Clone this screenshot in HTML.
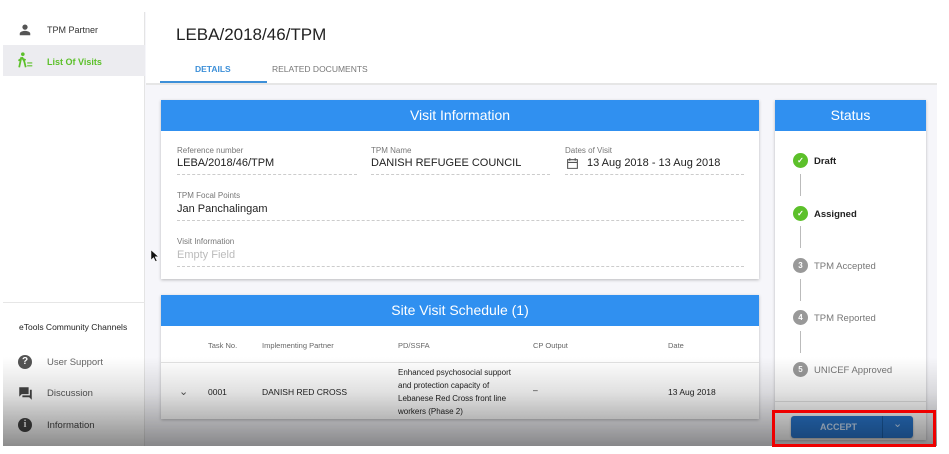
<!DOCTYPE html>
<html><head><meta charset="utf-8"><style>
*{box-sizing:border-box;margin:0;padding:0}
body{width:949px;height:454px;background:#fff;font-family:"Liberation Sans",sans-serif;position:relative;overflow:hidden}
.screen{position:absolute;left:3px;top:12px;width:934px;height:434px;background:#f6f6fa;overflow:hidden}
.side{position:absolute;left:0;top:0;width:142px;height:434px;background:#fff;border-right:1px solid #e4e4e4}
.hdr{position:absolute;left:143px;top:0;right:0;height:73px;background:#fff;border-bottom:2px solid #e6e6e6}
.abs{position:absolute}
.card{position:absolute;background:#fff;box-shadow:0 1px 3px rgba(0,0,0,.25)}
.ch{background:#3090f0;color:#fff;text-align:center;font-size:14px;height:31px;line-height:31px}
.lbl{position:absolute;font-size:8px;color:#777}
.val{position:absolute;font-size:11px;color:#222;border-bottom:1px dashed #ccc;padding-bottom:5px}
.th{position:absolute;font-size:7.5px;color:#666}
.td{position:absolute;font-size:8.5px;color:#222}
.st{position:absolute;left:792px;font-size:9.5px;color:#777}
.dot{position:absolute;left:790px;width:15px;height:15px;border-radius:50%;background:#999;color:#fff;font-size:8px;text-align:center;line-height:15px;font-weight:bold}
.gdot{background:#5cc02a}
.vl{position:absolute;left:797px;width:1px;height:22px;background:#bbb}
</style></head><body>
<div class="screen">
<div class="side">
 <svg class="abs" style="left:15px;top:11px" width="14" height="14" viewBox="0 0 24 24"><circle cx="12" cy="7" r="4.5" fill="#555"/><path d="M3 21v-3c0-3 6-4.5 9-4.5s9 1.5 9 4.5v3z" fill="#555"/></svg>
 <div class="abs" style="left:44px;top:13px;font-size:9px;color:#333">TPM Partner</div>
 <div class="abs" style="left:0;top:33px;width:142px;height:31px;background:#ececf0"></div>
 <svg class="abs" style="left:13px;top:40px" width="18" height="16" viewBox="0 0 24 22"><circle cx="9" cy="3" r="2.5" fill="#5cc02a"/><path d="M7 7l-3 14M8 7l3 6 2 8M7 9l-4 3M8 9l5 2" stroke="#5cc02a" stroke-width="2.4" fill="none"/><path d="M15 15h7M15 19h7" stroke="#5cc02a" stroke-width="1.5"/></svg>
 <div class="abs" style="left:44px;top:45px;font-size:9px;color:#5cc02a;font-weight:bold">List Of Visits</div>
 <div class="abs" style="left:0;top:290px;width:142px;height:1px;background:#e6e6e6"></div>
 <div class="abs" style="left:16px;top:310px;font-size:8.5px;color:#222">eTools Community Channels</div>
 <div class="abs" style="left:15px;top:343px;width:14px;height:14px;border-radius:50%;background:#555;color:#fff;font-size:10px;text-align:center;line-height:14px;font-weight:bold">?</div>
 <div class="abs" style="left:44px;top:345px;font-size:9.5px;color:#666">User Support</div>
 <svg class="abs" style="left:15px;top:374px" width="15" height="15" viewBox="0 0 24 24"><path d="M2 2h15v11H6l-4 4zM19 6h3v16l-4-4H7v-3h12z" fill="#444"/></svg>
 <div class="abs" style="left:44px;top:376px;font-size:9.5px;color:#555">Discussion</div>
 <div class="abs" style="left:15px;top:406px;width:14px;height:14px;border-radius:50%;background:#444;color:#fff;font-size:10px;text-align:center;line-height:14px;font-weight:bold;font-family:'Liberation Serif',serif">i</div>
 <div class="abs" style="left:44px;top:408px;font-size:9.5px;color:#444">Information</div>
</div>
<div class="hdr">
 <div class="abs" style="left:30px;top:13px;font-size:17px;color:#222">LEBA/2018/46/TPM</div>
 <div class="abs" style="left:49px;top:52px;font-size:8.5px;color:#3c8fd8;font-weight:bold">DETAILS</div>
 <div class="abs" style="left:14px;top:69px;width:107px;height:2px;background:#3c8fd8"></div>
 <div class="abs" style="left:126px;top:52px;font-size:8.5px;color:#777">RELATED DOCUMENTS</div>
</div>
<div class="card" style="left:158px;top:88px;width:598px;height:179px"><div class="ch">Visit Information</div></div>
<div class="lbl" style="left:174px;top:134px">Reference number</div>
<div class="val" style="left:174px;top:145px;width:180px">LEBA/2018/46/TPM</div>
<div class="lbl" style="left:368px;top:134px">TPM Name</div>
<div class="val" style="left:368px;top:145px;width:179px">DANISH REFUGEE COUNCIL</div>
<div class="lbl" style="left:562px;top:134px">Dates of Visit</div>
<svg class="abs" style="left:563px;top:145px" width="13" height="13" viewBox="0 0 24 24"><path d="M3 5h18v16H3zM3 10h18M7 2v5M17 2v5" stroke="#555" stroke-width="2" fill="none"/></svg>
<div class="val" style="left:562px;top:145px;width:179px;padding-left:22px">13 Aug 2018 - 13 Aug 2018</div>
<div class="lbl" style="left:174px;top:179px">TPM Focal Points</div>
<div class="val" style="left:174px;top:191px;width:567px">Jan Panchalingam</div>
<div class="lbl" style="left:174px;top:225px">Visit Information</div>
<div class="val" style="left:174px;top:237px;width:567px;color:#bbb">Empty Field</div>
<div class="card" style="left:158px;top:283px;width:598px;height:124px"><div class="ch">Site Visit Schedule (1)</div>
 <div class="abs" style="left:0;top:67px;width:100%;height:1px;background:#e2e2e2"></div></div>
<div class="th" style="left:205px;top:329px">Task No.</div>
<div class="th" style="left:259px;top:329px">Implementing Partner</div>
<div class="th" style="left:395px;top:329px">PD/SSFA</div>
<div class="th" style="left:530px;top:329px">CP Output</div>
<div class="th" style="left:665px;top:329px">Date</div>
<div class="td" style="left:176px;top:373px;font-size:11px;color:#555">&#8964;</div>
<div class="td" style="left:205px;top:375px">0001</div>
<div class="td" style="left:259px;top:375px">DANISH RED CROSS</div>
<div class="td" style="left:395px;top:354px;line-height:13px;font-size:8px;white-space:nowrap">Enhanced psychosocial support<br>and protection capacity of<br>Lebanese Red Cross front line<br>workers (Phase 2)</div>
<div class="td" style="left:530px;top:373px">–</div>
<div class="td" style="left:665px;top:375px">13 Aug 2018</div>
<div class="card" style="left:772px;top:88px;width:151px;height:340px"><div class="ch">Status</div>
 <div class="abs" style="left:0;top:301px;width:100%;height:1px;background:#e2e2e2"></div></div>
<div class="dot gdot" style="top:141px">✓</div><div class="st" style="left:811px;top:144px;color:#222;font-weight:bold">Draft</div>
<div class="vl" style="top:162px"></div>
<div class="dot gdot" style="top:194px">✓</div><div class="st" style="left:811px;top:197px;color:#222;font-weight:bold">Assigned</div>
<div class="vl" style="top:214px"></div>
<div class="dot" style="top:246px">3</div><div class="st" style="left:811px;top:249px">TPM Accepted</div>
<div class="vl" style="top:267px"></div>
<div class="dot" style="top:298px">4</div><div class="st" style="left:811px;top:301px">TPM Reported</div>
<div class="vl" style="top:319px"></div>
<div class="dot" style="top:350px">5</div><div class="st" style="left:811px;top:353px">UNICEF Approved</div>
<div class="abs" style="left:788px;top:404px;width:122px;height:22px;background:#2a78d0;border-radius:3px;box-shadow:0 1px 2px rgba(0,0,0,.3)"></div>
<div class="abs" style="left:879px;top:404px;width:1px;height:22px;background:#1b5fa8"></div>
<div class="abs" style="left:817px;top:410px;font-size:9px;color:#cfe3fa;font-weight:bold">ACCEPT</div>
<div class="abs" style="left:890px;top:405px;font-size:11px;color:#cfe3fa">&#8964;</div>
<div class="abs" style="left:0;top:345px;width:934px;height:89px;background:linear-gradient(rgba(0,0,0,0),rgba(0,0,0,.12) 40%,rgba(0,0,0,.45))"></div>
<svg class="abs" style="left:148px;top:238px" width="8" height="12" viewBox="0 0 8 12"><path d="M0 0v10l2.5-2.5 2 4 1.5-.7-2-4H7.5z" fill="#111" stroke="#fff" stroke-width=".5"/></svg>
</div>
<div class="abs" style="left:772px;top:410px;width:164px;height:37px;border:3px solid #e00"></div>
</body></html>
